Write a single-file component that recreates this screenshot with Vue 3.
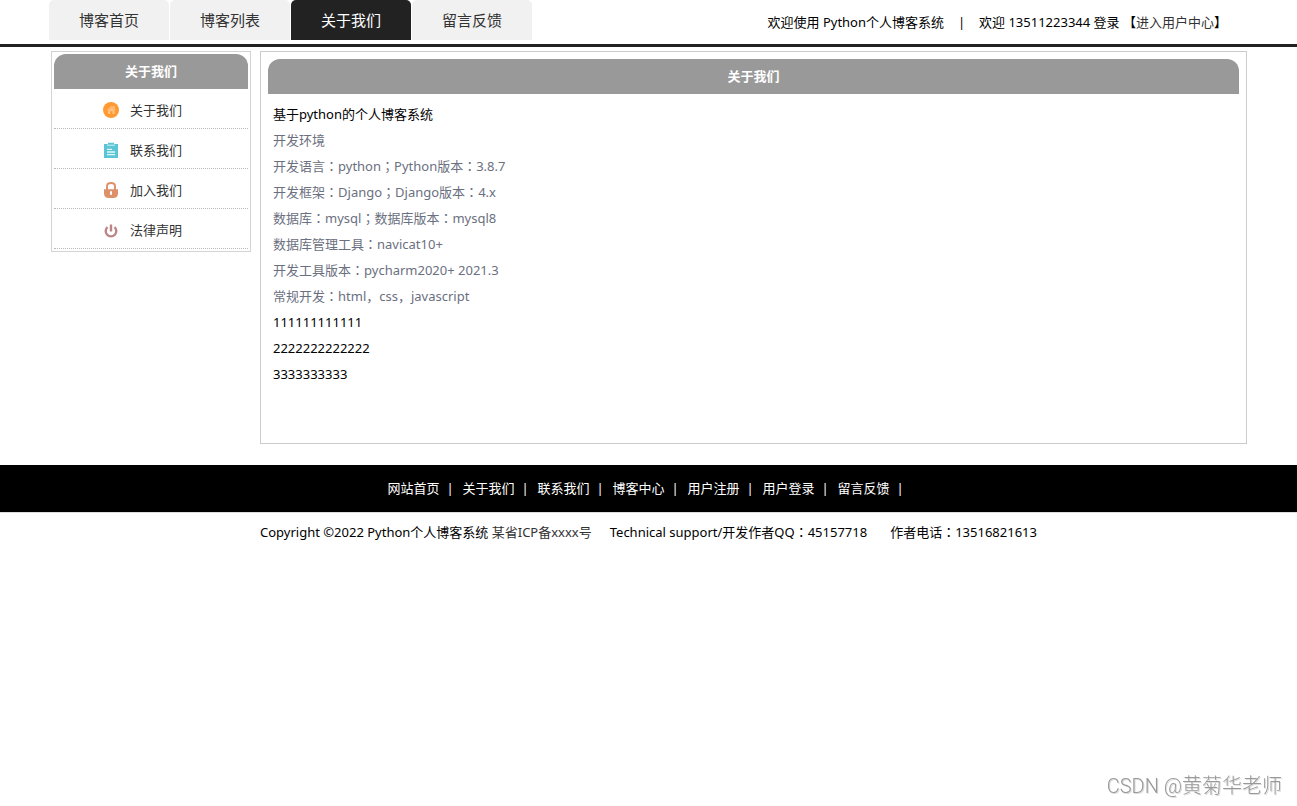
<script setup>
const tabs = ['博客首页', '博客列表', '关于我们', '留言反馈']
const activeTab = '关于我们'

const sideLinks = [
  { text: '关于我们', icon: 'home' },
  { text: '联系我们', icon: 'clipboard' },
  { text: '加入我们', icon: 'lock' },
  { text: '法律声明', icon: 'power' },
]

const lines = [
  { text: '基于python的个人博客系统' },
  { text: '开发环境', muted: true },
  { text: '开发语言：python；Python版本：3.8.7', muted: true },
  { text: '开发框架：Django；Django版本：4.x', muted: true },
  { text: '数据库：mysql；数据库版本：mysql8', muted: true },
  { text: '数据库管理工具：navicat10+', muted: true },
  { text: '开发工具版本：pycharm2020+ 2021.3', muted: true },
  { text: '常规开发：html，css，javascript', muted: true },
  { text: '111111111111' },
  { text: '2222222222222' },
  { text: '3333333333' },
]

// Colons and semicolons are set in a face that centres them in their cell.
const parts = (text) => text.split(/([：；])/).filter(Boolean)
const isMark = (part) => /^[：；]$/.test(part)

const footLinks = ['网站首页', '关于我们', '联系我们', '博客中心', '用户注册', '用户登录', '留言反馈']
</script>

<template>
  <div class="page">
    <header class="header">
      <nav class="tabs">
        <a v-for="t in tabs" :key="t" href="#" class="tab" :class="{ active: t === activeTab }">{{ t }}</a>
      </nav>
      <div class="welcome">
        <span>欢迎使用 Python个人博客系统</span>
        <span class="bar">|</span>
        <span>欢迎 13511223344 登录 【<a href="#">进入用户中心</a>】</span>
      </div>
    </header>

    <div class="body">
      <aside class="sidebar">
        <h2 class="title">关于我们</h2>
        <ul class="menu">
          <li v-for="s in sideLinks" :key="s.text">
            <a href="#">
              <svg class="icon" viewBox="0 0 16 16" aria-hidden="true">
                <g v-if="s.icon === 'home'">
                  <circle cx="8" cy="8" r="8" fill="#ff9a33" />
                  <path d="M3.5 8.2 8.6 4l1.3 1V4h1.7v2.4l1.2 1.3-1.2.2v4.2H9.4V9.2H7.2v2.9H5V8.3z" fill="#ffc184" />
                  <path d="M5.4 8 8.7 5.4 11 7.3" fill="none" stroke="#ffad5b" stroke-width="1" />
                </g>
                <g v-else-if="s.icon === 'clipboard'">
                  <path d="M1 2h4V0.8h6V2h4v14H1z" fill="#5bc5d6" />
                  <path d="M4 2.5h8v1.6H4z" fill="#a5e2ea" />
                  <path d="M4 7.3h5M4 10h8M4 12.7h8" stroke="#e4f8fa" stroke-width="1.3" />
                </g>
                <g v-else-if="s.icon === 'lock'">
                  <path d="M4 8V4.4C4 2.3 5.5 1.1 8 1.1s4 1.2 4 3.3V8" fill="none" stroke="#de9168" stroke-width="2" />
                  <path d="M1 7.3h14v4.2c0 3-2 4.5-4.5 4.5h-5C3 16 1 14.5 1 11.5z" fill="#de9168" />
                  <path d="M8 9.2v3.6" stroke="#fff" stroke-width="2" />
                </g>
                <g v-else fill="none" stroke="#bc8585" stroke-width="2.4">
                  <path d="M4.5 5.1a5.3 5.3 0 1 0 7 0" />
                  <path d="M8 2.5v7" />
                </g>
              </svg>
              <span>{{ s.text }}</span>
            </a>
          </li>
        </ul>
      </aside>

      <main class="main">
        <h1 class="title">关于我们</h1>
        <div class="content">
          <p v-for="l in lines" :key="l.text" :class="{ muted: l.muted }">
            <span v-for="(p, i) in parts(l.text)" :key="i" :class="{ mark: isMark(p) }">{{ p }}</span>
          </p>
        </div>
      </main>
    </div>

    <footer>
      <nav class="foot-nav">
        <span v-for="f in footLinks" :key="f" class="foot-item"><a href="#">{{ f }}</a><i>|</i></span>
      </nav>
      <div class="copyright">
        <span>Copyright ©2022 Python个人博客系统 <a href="#">某省ICP备xxxx号</a></span>
        <span>Technical support/开发作者QQ<span class="mark">：</span>45157718</span>
        <span class="phone">作者电话<span class="mark">：</span>13516821613</span>
      </div>
    </footer>

    <div class="watermark">CSDN @黄菊华老师</div>
  </div>
</template>

<style>
body {
  margin: 0;
  background: #fff;
}
</style>

<style scoped>
.page {
  font-family: "Noto Sans", "Noto Sans CJK SC", sans-serif;
  font-size: 13px;
  line-height: 26px;
  color: #000;
}
a {
  color: #333;
  text-decoration: none;
}
.mark {
  font-family: "Noto Sans CJK TC", sans-serif;
}
.header {
  display: flex;
  justify-content: space-between;
  height: 44px;
  padding: 0 70px 0 49px;
  border-bottom: 3px solid #222;
}
.tabs {
  display: flex;
  gap: 1px;
}
.tab {
  width: 120px;
  height: 40px;
  border-radius: 5px 5px 0 0;
  background: #f1f1f1;
  font-size: 15px;
  line-height: 40px;
  text-align: center;
}
.tab.active {
  background: #222;
  color: #fff;
}
.welcome {
  display: flex;
  line-height: 44px;
  white-space: nowrap;
}
.bar {
  width: 35px;
  text-align: center;
}
.body {
  display: flex;
  align-items: flex-start;
  gap: 9px;
  padding: 4px 50px 21px 51px;
}
.sidebar {
  box-sizing: border-box;
  flex: none;
  width: 200px;
  padding: 2px;
  border: 1px solid #d3d3d3;
}
.title {
  margin: 0;
  border-radius: 12px 12px 0 0;
  background: #999;
  color: #fff;
  font-size: 13px;
  font-weight: 700;
  line-height: 35px;
  text-align: center;
}
.menu {
  margin: 0;
  padding: 0;
  list-style: none;
}
.menu a {
  display: flex;
  align-items: center;
  justify-content: center;
  gap: 11px;
  height: 37px;
  padding: 2px 17px 0 0;
  border-bottom: 1px dotted #bbb;
}
.icon {
  width: 16px;
  height: 16px;
}
.main {
  box-sizing: border-box;
  flex: 1;
  min-height: 393px;
  padding: 7px;
  border: 1px solid #ccc;
}
.content {
  padding: 7px 5px;
}
.content p {
  margin: 0;
}
.muted {
  color: #6b7080;
}
.foot-nav {
  display: flex;
  justify-content: center;
  gap: 11px;
  padding: 10px 8px 11px 0;
  border-bottom: 1px solid #ddd;
  background: #000;
  color: #fff;
}
.foot-nav a {
  color: #fff;
}
.foot-item {
  display: flex;
  gap: 7px;
}
.foot-item i {
  width: 5px;
  font-style: normal;
  text-align: center;
}
.copyright {
  display: flex;
  justify-content: center;
  gap: 18px;
  padding: 6px 0;
}
.phone {
  padding-left: 5px;
}
.watermark {
  position: fixed;
  right: 15px;
  bottom: 7px;
  color: #999;
  font-family: Roboto, "Noto Sans CJK SC", sans-serif;
  font-size: 20px;
  font-weight: 300;
  text-shadow: 1px 1px 0 #ddd;
}
</style>
